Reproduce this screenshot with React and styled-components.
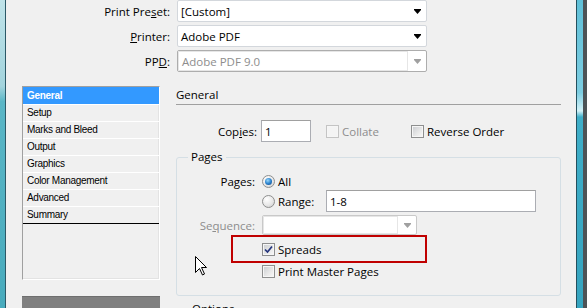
import styled, { createGlobalStyle } from "styled-components";

const GlobalStyle = createGlobalStyle`
  html, body {
    margin: 0;
    padding: 0;
    background: #f0f0f0;
    overflow: hidden;
  }
  body {
    font-family: "Open Sans", "Liberation Sans", sans-serif;
    font-size: 11.5px;
    color: #000;
  }
`;

const Frame = styled.div`
  display: flex;
  width: 587px;
  height: 308px;
  overflow: hidden;
`;

const LeftEdge = styled.div`
  width: 5px;
  border-right: 1px solid #2c5967;
  background: linear-gradient(to bottom, #bfe3e9 0%, #a3d4dd 28%, #5ab6c6 33%, #48abbd 100%);
`;

const RightEdge = styled.div`
  width: 6px;
  border-left: 1px solid #24505e;
  border-right: 4px solid #4d5356;
  background: linear-gradient(to bottom, #5fc0d8 0%, #7ccde1 30%, #d4f2f8 36%, #3eaec8 38%, #35a4bf 100%);
`;

const Dialog = styled.div`
  flex: 1;
  display: flex;
  flex-direction: column;
  background: #f0f0f0;
`;

const PrinterGrid = styled.div`
  display: grid;
  grid-template-columns: 164px 250px;
  grid-auto-rows: 22px;
  column-gap: 7px;
  row-gap: 3px;
  align-items: center;
`;

const FieldLabel = styled.span`
  text-align: right;
  white-space: nowrap;
  color: ${({ $disabled }) => ($disabled ? "#8d8d8d" : "#000")};
`;

const Combo = styled.div`
  height: ${({ $h }) => $h || 22}px;
  box-sizing: border-box;
  display: flex;
  align-items: stretch;
  background: #fff;
  border: 1px solid ${({ $disabled }) => ($disabled ? "#adadad" : "#d3d7dc")};
  border-radius: 2px;
`;

const ComboField = styled.div`
  flex: 1;
  display: flex;
  align-items: center;
  padding-left: 3px;
  white-space: nowrap;
  color: ${({ $disabled }) => ($disabled ? "#8d8d8d" : "#000")};
  border: ${({ $disabled }) => ($disabled ? "1px solid #e6e6e6" : "none")};
  border-right: ${({ $disabled }) => ($disabled ? "1px solid #e6e6e6" : "none")};
`;

const ComboArrow = styled.div`
  width: 18px;
  display: flex;
  align-items: center;
  justify-content: center;
  svg {
    display: block;
  }
`;

const Body = styled.div`
  display: flex;
  margin-top: 14px;
`;

const Sidebar = styled.div`
  width: 138px;
  margin-left: 16px;
  display: flex;
  flex-direction: column;
`;

const NavList = styled.div`
  height: 194px;
  box-sizing: border-box;
  border-top: 1px solid #a0a0a0;
  border-left: 1px solid #a0a0a0;
  border-right: 1px solid #fff;
  border-bottom: 1px solid #fff;
  box-shadow: inset -1px -1px 0 #e3e3e3;
`;

const NavItem = styled.div`
  height: 16px;
  line-height: 16px;
  padding-left: 4px;
  font-family: "Liberation Sans", Arial, sans-serif;
  font-size: 10px;
  letter-spacing: -0.3px;
  border-bottom: 1px solid ${({ $last }) => ($last ? "#000" : "#fff")};
  background: ${({ $active }) => ($active ? "#3399ff" : "transparent")};
  color: ${({ $active }) => ($active ? "#fff" : "#000")};
  font-weight: ${({ $active }) => ($active ? 600 : 400)};

  &:first-child {
    height: 17px;
    line-height: 17px;
  }
`;

const GrayBar = styled.div`
  margin-top: 16px;
  height: 20px;
  background: #808080;
  border-top: 1px solid #6e6e6e;
`;

const Main = styled.div`
  position: relative;
  width: 385px;
  margin-left: 16px;
`;

const Heading = styled.div`
  height: 18px;
  line-height: 18px;
  border-bottom: 1px solid #a0a0a0;
`;

const CopiesRow = styled.div`
  display: flex;
  align-items: center;
  height: 22px;
  margin-top: 15px;
`;

const RowLabel = styled.span`
  width: ${({ $w }) => $w}px;
  margin-right: 4px;
  text-align: right;
  white-space: nowrap;
`;

const TextInput = styled.div`
  width: ${({ $w }) => $w}px;
  height: 22px;
  box-sizing: border-box;
  display: flex;
  align-items: center;
  padding-left: 3px;
  background: #fff;
  border: 1px solid #abadb3;
  border-top-color: #a0a0a0;
`;

const CheckItem = styled.label`
  display: flex;
  align-items: center;
  gap: 3px;
  width: ${({ $w }) => ($w ? `${$w}px` : "auto")};
  margin-left: ${({ $ml }) => $ml || 0}px;
  white-space: nowrap;
  color: ${({ $disabled }) => ($disabled ? "#8d8d8d" : "#000")};
`;

const Box = styled.span`
  width: 13px;
  height: 13px;
  box-sizing: border-box;
  flex: none;
  display: flex;
  align-items: center;
  justify-content: center;
  border: 1px solid ${({ $disabled }) => ($disabled ? "#c4c4c4" : "#8e8f8f")};
  background: ${({ $disabled }) =>
    $disabled ? "#f4f4f4" : "linear-gradient(135deg, #c9ccd0 0%, #e9e9e9 60%, #fafafa 100%)"};
  box-shadow: inset 0 0 0 1px #f6f6f6;
  svg {
    display: block;
  }
`;

const RadioDot = styled.span`
  width: 13px;
  height: 13px;
  box-sizing: border-box;
  flex: none;
  border-radius: 50%;
  display: flex;
  align-items: center;
  justify-content: center;
  border: 1px solid #8e8f8f;
  background: radial-gradient(circle at 35% 30%, #ffffff 0%, #e8e8e8 55%, #c9c9c9 100%);

  &::after {
    content: "";
    display: ${({ $checked }) => ($checked ? "block" : "none")};
    width: 7px;
    height: 7px;
    border-radius: 50%;
    background: radial-gradient(circle at 40% 35%, #9ad8fa 0%, #2d84cf 50%, #0c3e78 100%);
  }
`;

const Group = styled.fieldset`
  margin: 7px 0 0;
  padding: 7px 0 16px;
  min-width: 0;
  box-sizing: border-box;
  width: 385px;
  border: 1px solid #d5dfe5;
  border-radius: 3px;
`;

const Legend = styled.legend`
  margin-left: 11px;
  padding: 0 3px;
  line-height: 16px;
`;

const PagesGrid = styled.div`
  display: grid;
  grid-template-columns: 78px 1fr;
  column-gap: 7px;
  align-items: center;
`;

const GridLabel = styled.span`
  text-align: right;
  white-space: nowrap;
  margin-top: ${({ $mt }) => $mt || 0}px;
  color: ${({ $disabled }) => ($disabled ? "#8d8d8d" : "#000")};
`;

const Line = styled.div`
  display: flex;
  align-items: center;
  height: ${({ $h }) => $h}px;
  margin-top: ${({ $mt }) => $mt || 0}px;
`;

const SequenceCombo = styled(Combo)`
  width: 155px;
  border-color: #c9c9c9;
`;

const Highlight = styled.div`
  grid-column: 1 / -1;
  margin-left: 54px;
  width: 196px;
  height: 28px;
  box-sizing: border-box;
  border: 2px solid #c00000;
  padding-left: 29px;
  display: flex;
  align-items: center;
`;

const NextLegend = styled.div`
  margin-top: 5px;
  padding-left: 16px;
  line-height: 16px;
`;

const Pointer = styled.svg`
  position: absolute;
  left: 19px;
  top: 170px;
`;

const Arrow = ({ disabled }) => (
  <svg width="7" height="5" viewBox="0 0 7 5">
    <path d="M0 0 H7 V1 L3.5 5 L0 1 Z" fill={disabled ? "#a0a0a0" : "#000"} />
  </svg>
);

const Check = () => (
  <svg width="9" height="9" viewBox="0 0 9 9">
    <path d="M1 4.5 L3.5 7 L8 1.5" fill="none" stroke="#24357d" strokeWidth="1.7" />
  </svg>
);

const navItems = [
  "General",
  "Setup",
  "Marks and Bleed",
  "Output",
  "Graphics",
  "Color Management",
  "Advanced",
  "Summary",
];

const App = () => {
  return (
    <>
      <GlobalStyle />
      <Frame>
        <LeftEdge />
        <Dialog>
          <PrinterGrid>
            <FieldLabel>Print Pre<u>s</u>et:</FieldLabel>
            <Combo>
              <ComboField>[Custom]</ComboField>
              <ComboArrow><Arrow /></ComboArrow>
            </Combo>
            <FieldLabel><u>P</u>rinter:</FieldLabel>
            <Combo>
              <ComboField>Adobe PDF</ComboField>
              <ComboArrow><Arrow /></ComboArrow>
            </Combo>
            <FieldLabel>PP<u>D</u>:</FieldLabel>
            <Combo $disabled>
              <ComboField $disabled>Adobe PDF 9.0</ComboField>
              <ComboArrow><Arrow disabled /></ComboArrow>
            </Combo>
          </PrinterGrid>

          <Body>
            <Sidebar>
              <NavList>
                {navItems.map((item, i) => (
                  <NavItem key={item} $active={i === 0} $last={i === navItems.length - 1}>
                    {item}
                  </NavItem>
                ))}
              </NavList>
              <GrayBar />
            </Sidebar>

            <Main>
              <Heading>General</Heading>

              <CopiesRow>
                <RowLabel $w={81}>Cop<u>i</u>es:</RowLabel>
                <TextInput $w={50}>1</TextInput>
                <CheckItem $disabled $w={85} $ml={15}>
                  <Box $disabled />
                  Collate
                </CheckItem>
                <CheckItem>
                  <Box />
                  Reverse Order
                </CheckItem>
              </CopiesRow>

              <Group>
                <Legend>Pages</Legend>
                <PagesGrid>
                  <GridLabel>Pages:</GridLabel>
                  <Line $h={18}>
                    <CheckItem>
                      <RadioDot $checked />
                      All
                    </CheckItem>
                  </Line>

                  <span />
                  <Line $h={22}>
                    <CheckItem $w={64}>
                      <RadioDot />
                      Range:
                    </CheckItem>
                    <TextInput $w={210}>1-8</TextInput>
                  </Line>

                  <GridLabel $disabled $mt={3}>
                    Se<u>q</u>uence:
                  </GridLabel>
                  <Line $h={20} $mt={3}>
                    <SequenceCombo $disabled $h={20}>
                      <ComboField $disabled />
                      <ComboArrow><Arrow disabled /></ComboArrow>
                    </SequenceCombo>
                  </Line>

                  <Highlight>
                    <CheckItem>
                      <Box><Check /></Box>
                      Spreads
                    </CheckItem>
                  </Highlight>

                  <span />
                  <Line $h={16}>
                    <CheckItem>
                      <Box />
                      Print Master Pages
                    </CheckItem>
                  </Line>
                </PagesGrid>
              </Group>

              <NextLegend>Options</NextLegend>

              <Pointer width="13" height="20" viewBox="0 0 13 20">
                <path
                  d="M0.5 0.5 L0.5 16.5 L4.5 12.5 L7.5 19 L9.5 18 L6.5 11.5 L11.5 11.5 Z"
                  fill="#fff"
                  stroke="#000"
                  strokeWidth="1"
                />
              </Pointer>
            </Main>
          </Body>
        </Dialog>
        <RightEdge />
      </Frame>
    </>
  );
};

export default App;
